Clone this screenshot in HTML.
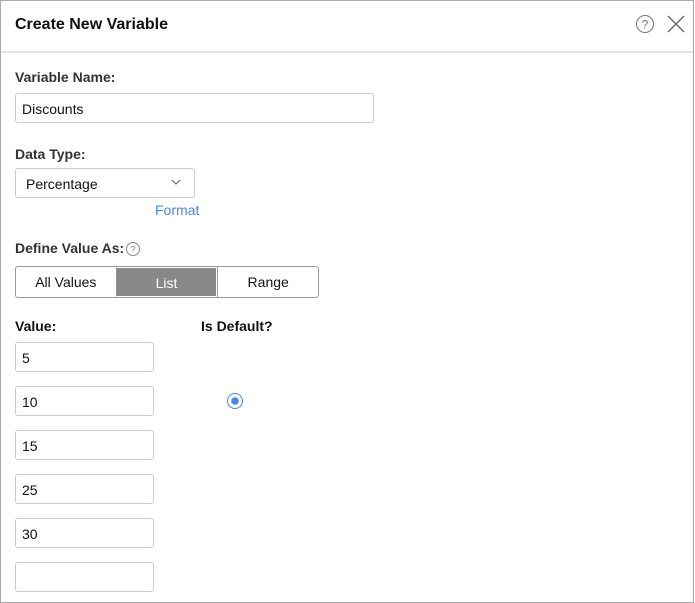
<!DOCTYPE html>
<html><head><style>
*{box-sizing:border-box;margin:0;padding:0}
body{width:695px;height:603px;background:#fff;font-family:"Liberation Sans",sans-serif;color:#222;position:relative;overflow:hidden}
.frame{position:absolute;left:0;top:0;width:694px;height:603px;border:1px solid #aaa;}
.abs{position:absolute}
.hdr{left:1px;top:51px;width:692px;height:2px;background:#e4e4e4}
.lbl{font-size:14px;font-weight:bold;color:#333}
.inp{border:1px solid #ccc;border-radius:3px;font-size:14px;padding-left:6px;line-height:30px;color:#111}
.seg{left:15px;top:266px;width:304px;height:32px;border:1px solid #999;border-radius:3px;display:flex;overflow:hidden}
.seg div{flex:1;text-align:center;line-height:30px;font-size:14px;color:#111}
.seg div+div{border-left:1px solid #999}
</style></head><body>
<div class="frame"></div>
<div class="abs" style="left:15px;top:16px;font-size:16px;font-weight:bold;color:#111">Create New Variable</div>
<svg class="abs" style="left:635px;top:14px" width="20" height="20" viewBox="0 0 20 20"><circle cx="10" cy="10" r="8.5" fill="none" stroke="#777" stroke-width="1"/><text x="10" y="14.5" font-size="12" text-anchor="middle" fill="#777" font-family="Liberation Sans">?</text></svg>
<svg class="abs" style="left:667px;top:15px" width="18" height="18" viewBox="0 0 18 18"><path d="M1 1L17 17M17 1L1 17" stroke="#666" stroke-width="1.3"/></svg>
<div class="abs hdr"></div>
<div class="abs lbl" style="left:15px;top:69px">Variable Name:</div>
<div class="abs inp" style="left:15px;top:93px;width:359px;height:30px">Discounts</div>
<div class="abs lbl" style="left:15px;top:146px">Data Type:</div>
<div class="abs inp" style="left:15px;top:168px;width:180px;height:30px;padding-left:10px">Percentage</div>
<svg class="abs" style="left:171px;top:179px" width="10" height="7" viewBox="0 0 10 7"><path d="M1 1L5 5L9 1" fill="none" stroke="#666" stroke-width="1.1"/></svg>
<div class="abs" style="left:155px;top:202px;font-size:14px;color:#4a86e0">Format</div>
<div class="abs lbl" style="left:15px;top:240px">Define Value As:</div>
<svg class="abs" style="left:125px;top:241px" width="16" height="16" viewBox="0 0 16 16"><circle cx="8" cy="8" r="6.5" fill="none" stroke="#888" stroke-width="1"/><text x="8" y="11.5" font-size="9" text-anchor="middle" fill="#888" font-family="Liberation Sans">?</text></svg>
<div class="abs seg"><div>All Values</div><div style="background:#888;color:#fff;border:1px solid #fff;border-left:1px solid #999">List</div><div>Range</div></div>
<div class="abs lbl" style="left:15px;top:318px;color:#111">Value:</div>
<div class="abs lbl" style="left:201px;top:318px;color:#111">Is Default?</div>
<div class="abs inp" style="left:15px;top:342px;width:139px;height:30px">5</div>
<div class="abs inp" style="left:15px;top:386px;width:139px;height:30px">10</div>
<div class="abs inp" style="left:15px;top:430px;width:139px;height:30px">15</div>
<div class="abs inp" style="left:15px;top:474px;width:139px;height:30px">25</div>
<div class="abs inp" style="left:15px;top:518px;width:139px;height:30px">30</div>
<div class="abs inp" style="left:15px;top:562px;width:139px;height:30px"></div>
<svg class="abs" style="left:226px;top:392px" width="18" height="18" viewBox="0 0 18 18"><circle cx="9" cy="9" r="7.5" fill="#fff" stroke="#4a86e0" stroke-width="1"/><circle cx="9" cy="9" r="3.8" fill="#4a86e0"/></svg>
</body></html>
